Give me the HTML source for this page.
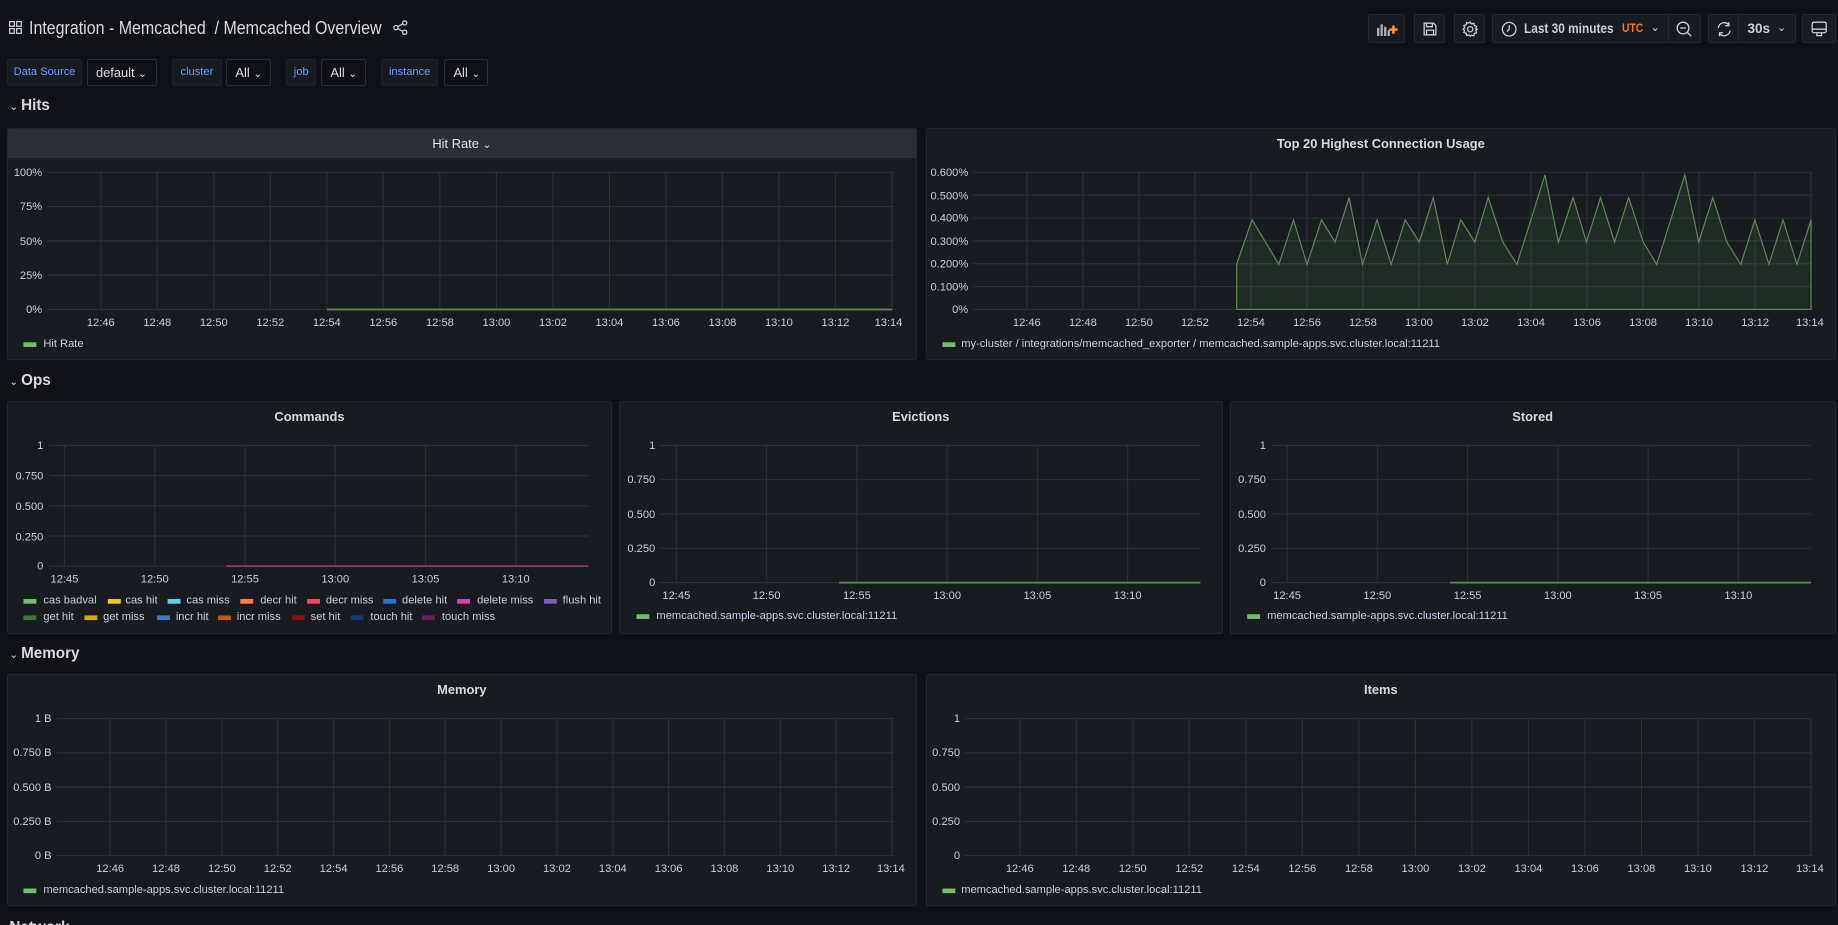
<!DOCTYPE html>
<html><head><meta charset="utf-8">
<style>
*{box-sizing:border-box;margin:0;padding:0}
html,body{background:#111217;width:1838px;height:925px;overflow:hidden}
#w{position:absolute;left:0;top:0;width:1568px;height:789px;zoom:1.17219;font-family:"Liberation Sans",sans-serif;color:#d8d9da;overflow:hidden}
.a{position:absolute}
.sx{transform:scaleX(0.88);transform-origin:0 50%;white-space:nowrap}
.panel{position:absolute;background:#181b1f;border:1px solid #24272d;border-radius:2px}
.pt{position:absolute;left:0;right:0;top:0;height:26px;line-height:26px;text-align:center;font-size:11px;font-weight:bold;color:#d8d9da}
.lbl{position:absolute;top:50px;height:23px;line-height:22px;background:#181b1f;border:1px solid #202328;color:#6e9fff;font-size:9.5px;text-align:center;border-radius:2px}
.val{position:absolute;top:50px;height:23px;line-height:22px;background:#111217;border:1px solid #2c3036;color:#d8d9da;font-size:11px;padding-left:7px;border-radius:2px}
.row{position:absolute;left:8px;font-size:13px;font-weight:bold;color:#d8d9da}
.btn{position:absolute;top:12px;height:25px;border:1px solid #25282d;background:#181b1f;border-radius:2px}
svg text{font-family:"Liberation Sans",sans-serif}
</style></head><body><div id="w">
<svg class="a" style="left:8px;top:18px" width="11" height="11" viewBox="0 0 11 11" fill="none" stroke="#ccccdc" stroke-width="1.1"><rect x="0.5" y="0.5" width="4" height="4"/><rect x="6.5" y="0.5" width="4" height="4"/><rect x="0.5" y="6.5" width="4" height="4"/><rect x="6.5" y="6.5" width="4" height="4"/></svg>
<div class="a sx" style="left:25px;top:15px;font-size:15.5px;color:#d8d9da">Integration - Memcached &nbsp;/ Memcached Overview</div>
<svg class="a" style="left:335px;top:17px" width="13" height="13" viewBox="0 0 13 13" fill="none" stroke="#ccccdc" stroke-width="1.1"><circle cx="10" cy="2.5" r="1.8"/><circle cx="2.5" cy="6.5" r="1.8"/><circle cx="10" cy="10.5" r="1.8"/><path d="M4.1 5.6L8.4 3.3M4.1 7.4L8.4 9.7"/></svg>
<div class="btn" style="left:1167px;width:32px"><svg class="a" style="left:7px;top:6px" width="18" height="12" viewBox="0 0 18 12"><g fill="#aeb0b6"><rect x="0" y="5" width="2" height="7"/><rect x="3" y="2" width="2" height="10"/><rect x="6" y="4" width="2" height="8"/><rect x="9" y="7" width="2" height="5"/></g><path d="M14 3v7M10.5 6.5h7" stroke="#ff9830" stroke-width="2.2"/></svg></div>
<div class="btn" style="left:1206px;width:27px"><svg class="a" style="left:7px;top:6px" width="12" height="12" viewBox="0 0 12 12" fill="none" stroke="#ccccdc" stroke-width="1.1"><path d="M1 1h8l2 2v8H1z"/><rect x="3" y="7" width="6" height="4"/><path d="M3 1v3h5V1"/></svg></div>
<div class="btn" style="left:1240px;width:27px"><svg class="a" style="left:6px;top:5px" width="14" height="14" viewBox="0 0 14 14" fill="none" stroke="#ccccdc" stroke-width="1.1"><circle cx="7" cy="7" r="2.2"/><path d="M7 1l1.2 1.5 1.9-.5.4 1.9 1.9.6-.6 1.9L13 7l-1.2 1.2.6 1.9-1.9.6-.4 1.9-1.9-.5L7 13l-1.2-1.2-1.9.5-.4-1.9-1.9-.6.6-1.9L1 7l1.2-1.2-.6-1.9 1.9-.6.4-1.9 1.9.5z"/></svg></div>
<div class="btn" style="left:1273px;width:178px"><svg class="a" style="left:7px;top:5px" width="14" height="14" viewBox="0 0 14 14" fill="none" stroke="#ccccdc" stroke-width="1.1"><circle cx="7" cy="7" r="5.8"/><path d="M7 3.5V7L5 9"/></svg><span class="a sx" style="left:26px;top:5px;font-size:11.5px;font-weight:bold;color:#ccccdc">Last 30 minutes</span><span class="a sx" style="left:110px;top:6px;font-size:10px;font-weight:bold;color:#ff780a">UTC</span><span class="a" style="left:134px;top:4px;font-size:10px;color:#ccccdc">⌄</span><div class="a" style="left:149px;top:0;bottom:0;border-left:1px solid #25282d"></div><svg class="a" style="left:156px;top:5px" width="14" height="14" viewBox="0 0 14 14" fill="none" stroke="#ccccdc" stroke-width="1.1"><circle cx="6" cy="6" r="5"/><path d="M3.5 6h5M9.7 9.7L13 13"/></svg></div>
<div class="btn" style="left:1457px;width:75px"><svg class="a" style="left:6px;top:5px" width="14" height="14" viewBox="0 0 14 14" fill="none" stroke="#ccccdc" stroke-width="1.1"><path d="M2 6a5 5 0 0 1 9-2.5M12 8a5 5 0 0 1-9 2.5M11 1v3H8M3 13v-3h3"/></svg><div class="a" style="left:25px;top:0;bottom:0;border-left:1px solid #25282d"></div><span class="a" style="left:33px;top:5px;font-size:11.5px;font-weight:bold;color:#ccccdc">30s</span><span class="a" style="left:58px;top:4px;font-size:10px;color:#ccccdc">⌄</span></div>
<div class="btn" style="left:1537px;width:29px"><svg class="a" style="left:7px;top:5px" width="14" height="14" viewBox="0 0 14 14" fill="none" stroke="#ccccdc" stroke-width="1.1"><rect x="1" y="1" width="12" height="9" rx="1.5"/><path d="M1 7h12M5 10v2.5h4V10"/></svg></div>
<div class="lbl" style="left:6px;width:64px">Data Source</div><div class="val" style="left:74px;width:60px">default <span style="font-size:9px">⌄</span></div>
<div class="lbl" style="left:147px;width:42px">cluster</div><div class="val" style="left:193px;width:38px">All <span style="font-size:9px">⌄</span></div>
<div class="lbl" style="left:244px;width:26px">job</div><div class="val" style="left:274px;width:38px">All <span style="font-size:9px">⌄</span></div>
<div class="lbl" style="left:325px;width:49px">instance</div><div class="val" style="left:379px;width:37px">All <span style="font-size:9px">⌄</span></div>
<div class="row" style="top:83px"><span style="font-size:9px;font-weight:normal">⌄ </span>Hits</div>
<div class="row" style="top:317px"><span style="font-size:9px;font-weight:normal">⌄ </span>Ops</div>
<div class="row" style="top:550px"><span style="font-size:9px;font-weight:normal">⌄ </span>Memory</div>
<div class="row" style="top:784px">Network</div>
<div class="panel" style="left:6px;top:109px;width:776px;height:198px"><div class="pt" style="background:#2c3035;font-weight:normal;color:#e0e0e6;height:25px;line-height:25px">Hit Rate <span style="font-size:9px">⌄</span></div></div>
<div class="panel" style="left:790px;top:109px;width:776px;height:198px"><div class="pt">Top 20 Highest Connection Usage</div></div>
<div class="panel" style="left:6px;top:342px;width:516px;height:199px"><div class="pt">Commands</div></div>
<div class="panel" style="left:528px;top:342px;width:515px;height:199px"><div class="pt">Evictions</div></div>
<div class="panel" style="left:1049px;top:342px;width:517px;height:199px"><div class="pt">Stored</div></div>
<div class="panel" style="left:6px;top:575px;width:776px;height:198px"><div class="pt">Memory</div></div>
<div class="panel" style="left:790px;top:575px;width:776px;height:198px"><div class="pt">Items</div></div>
<svg class="a" style="left:0;top:0" width="1568" height="789">
<g stroke="#2b2e34" stroke-width="1" fill="none">
<path d="M40 147H763M40 176.25H763M40 205.5H763M40 234.75H763M40 264H763M86 147V264M134.2 147V264M182.4 147V264M230.6 147V264M278.8 147V264M327 147V264M375.3 147V264M423.5 147V264M471.7 147V264M519.9 147V264M568.1 147V264M616.3 147V264M664.5 147V264M712.7 147V264M761 147V264"/>
<path d="M830 147H1546M830 166.5H1546M830 186H1546M830 205.5H1546M830 225H1546M830 244.5H1546M830 264H1546M876 147V264M923.8 147V264M971.6 147V264M1019.4 147V264M1067.2 147V264M1115 147V264M1162.7 147V264M1210.5 147V264M1258.3 147V264M1306.1 147V264M1353.9 147V264M1401.7 147V264M1449.5 147V264M1497.3 147V264M1545 147V264"/>
<path d="M42 380H502M42 405.75H502M42 431.5H502M42 457.25H502M42 483H502M55 380V483M132 380V483M209 380V483M286 380V483M363 380V483M440 380V483"/>
<path d="M563 380H1024M563 409.25H1024M563 438.5H1024M563 467.75H1024M563 497H1024M577 380V497M654 380V497M731 380V497M808 380V497M885 380V497M962 380V497"/>
<path d="M1084 380H1545M1084 409.25H1545M1084 438.5H1545M1084 467.75H1545M1084 497H1545M1098 380V497M1175 380V497M1252 380V497M1329 380V497M1406 380V497M1483 380V497"/>
<path d="M48 613H763M48 642.25H763M48 671.5H763M48 700.75H763M48 730H763M94 613V730M141.6 613V730M189.3 613V730M236.9 613V730M284.6 613V730M332.2 613V730M379.8 613V730M427.5 613V730M475.1 613V730M522.8 613V730M570.4 613V730M618 613V730M665.7 613V730M713.3 613V730M761 613V730"/>
<path d="M823 613H1546M823 642.25H1546M823 671.5H1546M823 700.75H1546M823 730H1546M870 613V730M918.2 613V730M966.4 613V730M1014.6 613V730M1062.8 613V730M1111 613V730M1159.3 613V730M1207.5 613V730M1255.7 613V730M1303.9 613V730M1352.1 613V730M1400.3 613V730M1448.5 613V730M1496.7 613V730M1545 613V730"/>
</g>
<path d="M1055 264V225.5L1068.1 187.5L1091 225.5L1103.5 187.5L1115 225.5L1127.4 187.5L1138.9 206.5L1150.9 168.5L1162.4 225.5L1174.8 187.5L1186.8 225.5L1198.8 187.5L1210.8 206.5L1222.7 168.5L1234.7 225.5L1246.2 187.5L1258.2 206.5L1269.6 168.5L1282.1 206.5L1294.1 225.5L1306 187.5L1318 149.3L1329.5 206.5L1342 168.5L1353.4 206.5L1365.4 168.5L1377.4 206.5L1389.4 168.5L1401.8 206.5L1413.3 225.5L1425.3 187.5L1437.3 149.3L1449.2 206.5L1461.2 168.5L1473.2 206.5L1485.1 225.5L1497.1 187.5L1509.1 225.5L1521.1 187.5L1533 225.5L1545 187.5V264Z" fill="rgba(115,191,105,0.1)" stroke="#5f8a58" stroke-width="1"/>
<path d="M279 264H761" stroke="#5f8a58" stroke-width="1.5"/>
<path d="M193 483H502" stroke="#8a3a6a" stroke-width="1.5"/>
<path d="M716 497H1024M1237 497H1545" stroke="#5f8a58" stroke-width="1.5"/>
<g fill="#ccccdc" font-size="9.5" text-anchor="end">
<text x="36" y="150">100%</text><text x="36" y="179">75%</text><text x="36" y="209">50%</text><text x="36" y="238">25%</text><text x="36" y="267">0%</text>
<text x="826" y="150">0.600%</text><text x="826" y="170">0.500%</text><text x="826" y="189">0.400%</text><text x="826" y="209">0.300%</text><text x="826" y="228">0.200%</text><text x="826" y="248">0.100%</text><text x="826" y="267">0%</text>
<text x="37" y="383">1</text><text x="37" y="409">0.750</text><text x="37" y="435">0.500</text><text x="37" y="461">0.250</text><text x="37" y="486">0</text>
<text x="559" y="383">1</text><text x="559" y="412">0.750</text><text x="559" y="442">0.500</text><text x="559" y="471">0.250</text><text x="559" y="500">0</text>
<text x="1080" y="383">1</text><text x="1080" y="412">0.750</text><text x="1080" y="442">0.500</text><text x="1080" y="471">0.250</text><text x="1080" y="500">0</text>
<text x="44" y="616">1 B</text><text x="44" y="645">0.750 B</text><text x="44" y="675">0.500 B</text><text x="44" y="704">0.250 B</text><text x="44" y="733">0 B</text>
<text x="819" y="616">1</text><text x="819" y="645">0.750</text><text x="819" y="675">0.500</text><text x="819" y="704">0.250</text><text x="819" y="733">0</text>
</g>
<g fill="#ccccdc" font-size="9.5" text-anchor="middle">
<text x="86" y="278">12:46</text><text x="134.2" y="278">12:48</text><text x="182.4" y="278">12:50</text><text x="230.6" y="278">12:52</text><text x="278.8" y="278">12:54</text><text x="327" y="278">12:56</text><text x="375.3" y="278">12:58</text><text x="423.5" y="278">13:00</text><text x="471.7" y="278">13:02</text><text x="519.9" y="278">13:04</text><text x="568.1" y="278">13:06</text><text x="616.3" y="278">13:08</text><text x="664.5" y="278">13:10</text><text x="712.7" y="278">13:12</text><text x="758" y="278">13:14</text>
<text x="876" y="278">12:46</text><text x="923.8" y="278">12:48</text><text x="971.6" y="278">12:50</text><text x="1019.4" y="278">12:52</text><text x="1067.2" y="278">12:54</text><text x="1115" y="278">12:56</text><text x="1162.7" y="278">12:58</text><text x="1210.5" y="278">13:00</text><text x="1258.3" y="278">13:02</text><text x="1306.1" y="278">13:04</text><text x="1353.9" y="278">13:06</text><text x="1401.7" y="278">13:08</text><text x="1449.5" y="278">13:10</text><text x="1497.3" y="278">13:12</text><text x="1544" y="278">13:14</text>
<text x="55" y="497">12:45</text><text x="132" y="497">12:50</text><text x="209" y="497">12:55</text><text x="286" y="497">13:00</text><text x="363" y="497">13:05</text><text x="440" y="497">13:10</text>
<text x="577" y="511">12:45</text><text x="654" y="511">12:50</text><text x="731" y="511">12:55</text><text x="808" y="511">13:00</text><text x="885" y="511">13:05</text><text x="962" y="511">13:10</text>
<text x="1098" y="511">12:45</text><text x="1175" y="511">12:50</text><text x="1252" y="511">12:55</text><text x="1329" y="511">13:00</text><text x="1406" y="511">13:05</text><text x="1483" y="511">13:10</text>
<text x="94" y="744">12:46</text><text x="141.6" y="744">12:48</text><text x="189.3" y="744">12:50</text><text x="236.9" y="744">12:52</text><text x="284.6" y="744">12:54</text><text x="332.2" y="744">12:56</text><text x="379.8" y="744">12:58</text><text x="427.5" y="744">13:00</text><text x="475.1" y="744">13:02</text><text x="522.8" y="744">13:04</text><text x="570.4" y="744">13:06</text><text x="618" y="744">13:08</text><text x="665.7" y="744">13:10</text><text x="713.3" y="744">13:12</text><text x="760" y="744">13:14</text>
<text x="870" y="744">12:46</text><text x="918.2" y="744">12:48</text><text x="966.4" y="744">12:50</text><text x="1014.6" y="744">12:52</text><text x="1062.8" y="744">12:54</text><text x="1111" y="744">12:56</text><text x="1159.3" y="744">12:58</text><text x="1207.5" y="744">13:00</text><text x="1255.7" y="744">13:02</text><text x="1303.9" y="744">13:04</text><text x="1352.1" y="744">13:06</text><text x="1400.3" y="744">13:08</text><text x="1448.5" y="744">13:10</text><text x="1496.7" y="744">13:12</text><text x="1544" y="744">13:14</text>
</g>
<g font-size="9.5" fill="#ccccdc">
<rect x="20" y="292" width="11" height="4" fill="#73bf69"/><text x="37" y="296">Hit Rate</text>
<rect x="804" y="292" width="11" height="4" fill="#73bf69"/><text x="820" y="296">my-cluster / integrations/memcached_exporter / memcached.sample-apps.svc.cluster.local:11211</text>
<rect x="543" y="524" width="11" height="4" fill="#73bf69"/><text x="560" y="528">memcached.sample-apps.svc.cluster.local:11211</text>
<rect x="1064" y="524" width="11" height="4" fill="#73bf69"/><text x="1081" y="528">memcached.sample-apps.svc.cluster.local:11211</text>
<rect x="20" y="758" width="11" height="4" fill="#73bf69"/><text x="37" y="762">memcached.sample-apps.svc.cluster.local:11211</text>
<rect x="804" y="758" width="11" height="4" fill="#73bf69"/><text x="820" y="762">memcached.sample-apps.svc.cluster.local:11211</text>
<rect x="20" y="511" width="11" height="4" fill="#73bf69"/><text x="37" y="515">cas badval</text>
<rect x="92" y="511" width="11" height="4" fill="#f2cc0c"/><text x="107" y="515">cas hit</text>
<rect x="143" y="511" width="11" height="4" fill="#5ad5e8"/><text x="159" y="515">cas miss</text>
<rect x="205" y="511" width="11" height="4" fill="#ff7f3f"/><text x="222" y="515">decr hit</text>
<rect x="262" y="511" width="11" height="4" fill="#f2495c"/><text x="278" y="515">decr miss</text>
<rect x="327" y="511" width="11" height="4" fill="#1f78d1"/><text x="343" y="515">delete hit</text>
<rect x="390" y="511" width="11" height="4" fill="#d143ac"/><text x="407" y="515">delete miss</text>
<rect x="464" y="511" width="11" height="4" fill="#7b60b8"/><text x="480" y="515">flush hit</text>
<rect x="20" y="525" width="11" height="4" fill="#3f7a34"/><text x="37" y="529">get hit</text>
<rect x="72" y="525" width="11" height="4" fill="#d9a615"/><text x="88" y="529">get miss</text>
<rect x="134" y="525" width="11" height="4" fill="#3a7ed0"/><text x="150" y="529">incr hit</text>
<rect x="186" y="525" width="11" height="4" fill="#c4521d"/><text x="202" y="529">incr miss</text>
<rect x="249" y="525" width="11" height="4" fill="#8b1212"/><text x="265" y="529">set hit</text>
<rect x="299" y="525" width="11" height="4" fill="#0d3c7e"/><text x="316" y="529">touch hit</text>
<rect x="360" y="525" width="11" height="4" fill="#6b1f5c"/><text x="377" y="529">touch miss</text>
</g>
</svg>
</div></body></html>
